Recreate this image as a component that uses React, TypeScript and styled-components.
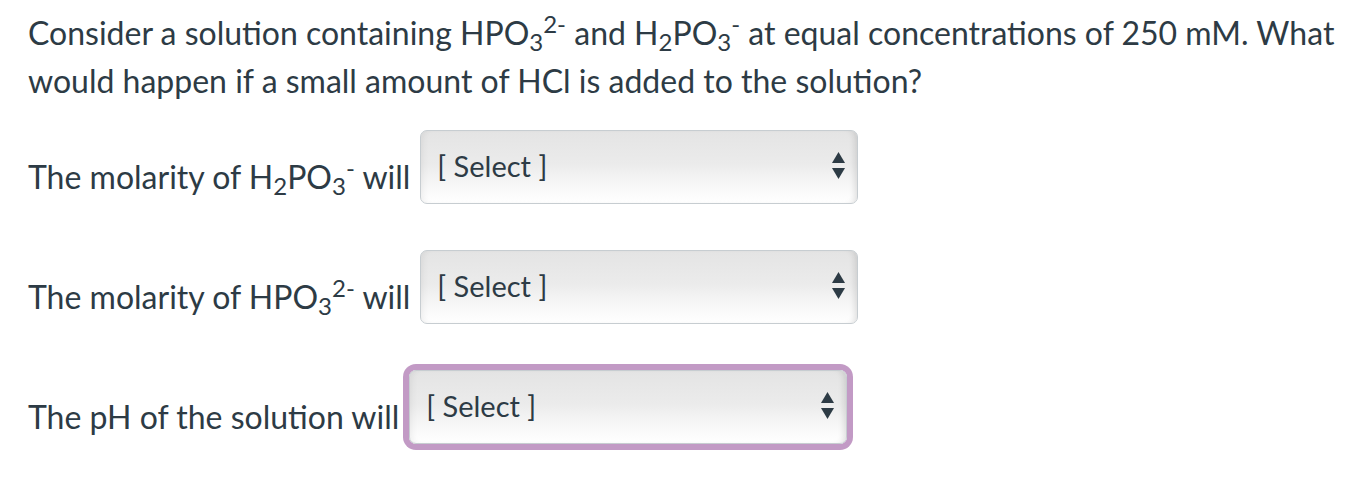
import styled, { createGlobalStyle } from 'styled-components';

const GlobalStyle = createGlobalStyle`
  html, body {
    margin: 0;
    padding: 0;
    background: #ffffff;
  }
  body {
    font-family: Lato, 'Noto Sans', 'Liberation Sans', sans-serif;
    color: #2d3b45;
  }
`;

const Page = styled.div`
  padding: 9px 28px 0 28px;
  width: 1370px;
  min-height: 504px;
  box-sizing: border-box;
`;

const Question = styled.p`
  margin: 0;
  font-size: 32px;
  line-height: 48px;
  max-width: 1320px;
`;

const Answers = styled.div`
  display: flex;
  flex-direction: column;
  gap: 46px;
  margin-top: 25px;
`;

const Row = styled.div`
  display: flex;
  align-items: center;
  font-size: 32px;
  line-height: 40px;
`;

const Label = styled.span`
  white-space: nowrap;
  margin-top: 19px;
`;

const Sub = styled.sub`
  font-size: 0.75em;
  line-height: 0;
  vertical-align: -0.25em;
`;

const Sup = styled.sup`
  font-size: 0.75em;
  line-height: 0;
  vertical-align: 0.5em;
`;

const SelectWrap = styled.div<{ $focused?: boolean }>`
  position: relative;
  margin-left: 10px;
  border-radius: 7px;
  box-shadow: ${({ $focused }) => ($focused ? '0 0 0 6px #c29ac5' : 'none')};
`;

const NativeSelect = styled.select`
  appearance: none;
  -webkit-appearance: none;
  display: block;
  width: 438px;
  height: 74px;
  box-sizing: border-box;
  margin: 0;
  padding: 0 40px 4px 16px;
  border: 1px solid #c7cdd1;
  border-radius: 7px;
  background: linear-gradient(to bottom, #e4e4e4 0%, #ebebeb 45%, #f7f7f7 75%, #ffffff 100%);
  box-shadow: inset -6px 0 6px -4px rgba(0, 0, 0, 0.12), inset 6px 0 6px -4px rgba(0, 0, 0, 0.06);
  font-family: Lato, 'Noto Sans', 'Liberation Sans', sans-serif;
  font-size: 29px;
  color: #2d3b45;
  outline: none;
`;

const Arrows = styled.svg`
  position: absolute;
  right: 13px;
  top: 22px;
  width: 13px;
  height: 27px;
  pointer-events: none;
`;

function Select({ focused }: { focused?: boolean }) {
  return (
    <SelectWrap $focused={focused}>
      <NativeSelect defaultValue="">
        <option value="">[ Select ]</option>
        <option value="inc">increase</option>
        <option value="dec">decrease</option>
        <option value="same">stay the same</option>
      </NativeSelect>
      <Arrows viewBox="0 0 13 27">
        <path d="M6.5 0 L13 11 L0 11 Z" fill="#2d3b45" />
        <path d="M0 16 L13 16 L6.5 27 Z" fill="#2d3b45" />
      </Arrows>
    </SelectWrap>
  );
}

export default function App() {
  return (
    <>
      <GlobalStyle />
      <Page>
        <Question>
          Consider a solution containing HPO<Sub>3</Sub>
          <Sup>2-</Sup> and H<Sub>2</Sub>PO<Sub>3</Sub>
          <Sup>-</Sup> at equal concentrations of 250 mM. What would happen if a small
          amount of HCl is added to the solution?
        </Question>
        <Answers>
          <Row>
            <Label>
              The molarity of H<Sub>2</Sub>PO<Sub>3</Sub>
              <Sup>-</Sup> will
            </Label>
            <Select />
          </Row>
          <Row>
            <Label>
              The molarity of HPO<Sub>3</Sub>
              <Sup>2-</Sup> will
            </Label>
            <Select />
          </Row>
          <Row>
            <Label>The pH of the solution will</Label>
            <Select focused />
          </Row>
        </Answers>
      </Page>
    </>
  );
}
